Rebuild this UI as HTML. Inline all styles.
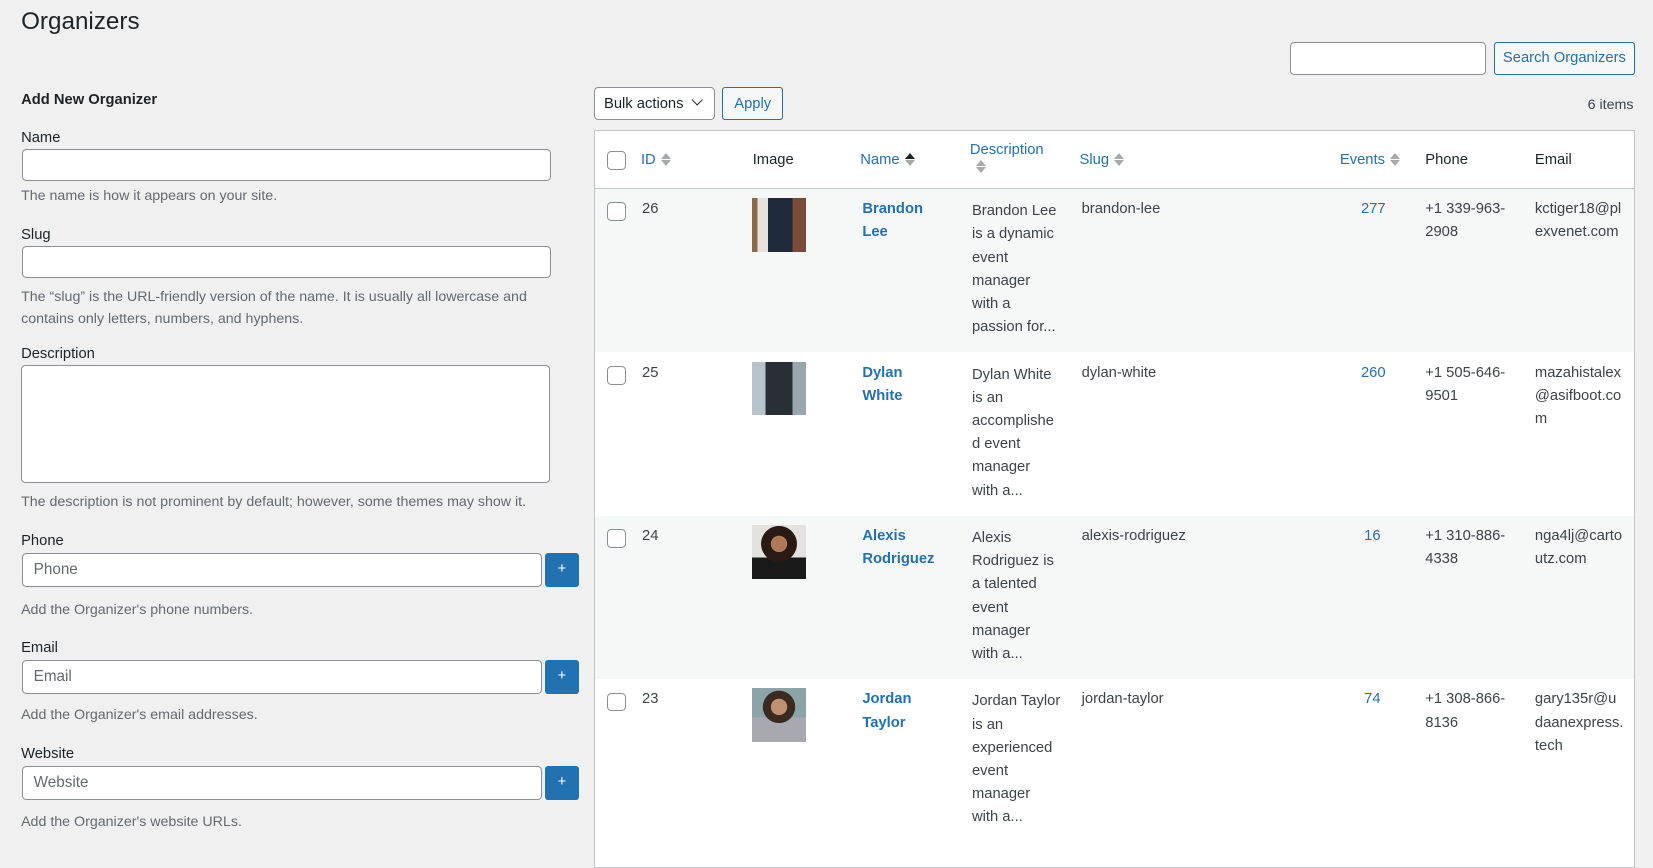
<!DOCTYPE html>
<html><head><meta charset="utf-8"><style>
html{zoom:1.0542}
body{margin:0;width:1568px;height:797px;overflow:hidden;background:#f0f0f1;font-family:"Liberation Sans",sans-serif;color:#3c434a;font-size:13.5px;position:relative}
.a{position:absolute;white-space:nowrap}
.lbl{color:#1d2327;font-size:14px}
.help{color:#646970;font-size:13.5px}
.inp{position:absolute;background:#fff;border:1px solid #8c8f94;border-radius:4px;box-sizing:border-box}
.ph{color:#646970;font-size:14.5px;padding:0 10px;line-height:30px}
.plus{position:absolute;background:#2271b1;color:#fff;border-radius:3px;width:32px;height:32px;text-align:center;line-height:32px;font-size:14px}
.btn{position:absolute;border:1px solid #2271b1;color:#2271b1;background:#f6f7f7;border-radius:3px;box-sizing:border-box;text-align:center;font-size:14px}
.blue{color:#2271b1}
.cb{position:absolute;width:16px;height:16px;border:1px solid #8c8f94;border-radius:4px;background:#fff}
.arr{display:inline-block;vertical-align:middle;margin-left:5px;width:9px}
.arr i{display:block;width:0;height:0;border-left:5px solid transparent;border-right:5px solid transparent}
.up{border-bottom:6px solid #a7aaad;margin-bottom:1px}
.dn{border-top:6px solid #a7aaad}
.row{position:absolute;left:564px;width:986px;height:155px}
.cell{position:absolute;line-height:22px;font-size:14px;white-space:nowrap}
.img{position:absolute;left:149px;top:9px;width:52px;height:51px}
</style></head><body>
<div class="a" style="left:20px;top:8px;font-size:23px;color:#1d2327">Organizers</div>
<div class="inp" style="left:1224px;top:40px;width:186px;height:31px"></div>
<div class="btn" style="left:1417px;top:40px;width:134px;height:31px;line-height:30px">Search Organizers</div>

<div class="a" style="left:20px;top:87px;font-weight:bold;font-size:14px;color:#1d2327">Add New Organizer</div>
<div class="a lbl" style="left:20px;top:123px">Name</div>
<div class="inp" style="left:21px;top:141px;width:502px;height:31px"></div>
<div class="a help" style="left:20px;top:178px">The name is how it appears on your site.</div>
<div class="a lbl" style="left:20px;top:215px">Slug</div>
<div class="inp" style="left:21px;top:233px;width:502px;height:31px"></div>
<div class="a help" style="left:20px;top:271px;line-height:21px">The “slug” is the URL-friendly version of the name. It is usually all lowercase and<br>contains only letters, numbers, and hyphens.</div>
<div class="a lbl" style="left:20px;top:328px">Description</div>
<div class="inp" style="left:20px;top:346px;width:502px;height:112px"></div>
<div class="a help" style="left:20px;top:469px">The description is not prominent by default; however, some themes may show it.</div>
<div class="a lbl" style="left:20px;top:506px">Phone</div>
<div class="inp ph" style="left:21px;top:525px;width:493px;height:32px">Phone</div>
<div class="plus" style="left:517px;top:525px">+</div>
<div class="a help" style="left:20px;top:571px">Add the Organizer's phone numbers.</div>
<div class="a lbl" style="left:20px;top:607px">Email</div>
<div class="inp ph" style="left:21px;top:626px;width:493px;height:32px">Email</div>
<div class="plus" style="left:517px;top:626px">+</div>
<div class="a help" style="left:20px;top:671px">Add the Organizer's email addresses.</div>
<div class="a lbl" style="left:20px;top:708px">Website</div>
<div class="inp ph" style="left:21px;top:727px;width:493px;height:32px">Website</div>
<div class="plus" style="left:517px;top:727px">+</div>
<div class="a help" style="left:20px;top:772px">Add the Organizer's website URLs.</div>

<div class="inp" style="left:563px;top:83px;width:115px;height:31px;line-height:31px;padding-left:9px;color:#1d2327;font-size:14px">Bulk actions <span style="display:inline-block;width:7px;height:7px;border-right:1.5px solid #1d2327;border-bottom:1.5px solid #1d2327;transform:rotate(45deg);margin:0 0 4px 5px"></span></div>
<div class="btn" style="left:685px;top:83px;width:58px;height:31px;line-height:31px">Apply</div>
<div class="a" style="left:1506px;top:92px;font-size:13.5px">6 items</div>

<div style="position:absolute;left:563px;top:123px;width:988px;height:700px;background:#fff;border:1px solid #c3c4c7;box-sizing:border-box"></div>
<div style="position:absolute;left:564px;top:178px;width:986px;height:1px;background:#c3c4c7"></div>
<div class="cb" style="left:576px;top:143px"></div>
<div class="a blue" style="left:608px;top:144px;font-size:14px">ID<span class="arr"><i class="up"></i><i class="dn"></i></span></div>
<div class="a" style="left:714px;top:144px;font-size:14px;color:#1d2327">Image</div>
<div class="a blue" style="left:816px;top:144px;font-size:14px">Name<span class="arr"><i class="up" style="border-bottom-color:#1d2327"></i><i class="dn"></i></span></div>
<div class="a blue" style="left:920px;top:135px;font-size:14px">Description<br><span class="arr" style="margin-left:6px"><i class="up"></i><i class="dn"></i></span></div>
<div class="a blue" style="left:1024px;top:144px;font-size:14px">Slug<span class="arr"><i class="up"></i><i class="dn"></i></span></div>
<div class="a blue" style="left:1271px;top:144px;font-size:14px">Events<span class="arr"><i class="up"></i><i class="dn"></i></span></div>
<div class="a" style="left:1352px;top:144px;font-size:14px;color:#1d2327">Phone</div>
<div class="a" style="left:1456px;top:144px;font-size:14px;color:#1d2327">Email</div>

<div class="row" style="top:179px;background:#f6f7f7">
<div class="cb" style="left:12px;top:13px"></div>
<div class="cell" style="left:45px;top:9px">26</div>
<div class="img" style="background:linear-gradient(90deg,#8a6a4a 0 10%,#e8e2da 10% 30%,#1e2a3a 30% 75%,#7a4a3a 75%)"></div>
<div class="cell blue" style="left:254px;top:9px;font-weight:bold">Brandon<br>Lee</div>
<div class="cell" style="left:358px;top:11px">Brandon Lee<br>is a dynamic<br>event<br>manager<br>with a<br>passion for...</div>
<div class="cell" style="left:462px;top:9px">brandon-lee</div>
<div class="cell blue" style="left:727px;top:9px">277</div>
<div class="cell" style="left:788px;top:9px">+1 339-963-<br>2908</div>
<div class="cell" style="left:892px;top:9px">kctiger18@pl<br>exvenet.com</div>
</div>
<div class="row" style="top:334px;background:#fff">
<div class="cb" style="left:12px;top:13px"></div>
<div class="cell" style="left:45px;top:9px">25</div>
<div class="img" style="background:linear-gradient(90deg,#b8c4cc 0 25%,#2a2f36 25% 75%,#9aa6ae 75%)"></div>
<div class="cell blue" style="left:254px;top:9px;font-weight:bold">Dylan<br>White</div>
<div class="cell" style="left:358px;top:11px">Dylan White<br>is an<br>accomplishe<br>d event<br>manager<br>with a...</div>
<div class="cell" style="left:462px;top:9px">dylan-white</div>
<div class="cell blue" style="left:727px;top:9px">260</div>
<div class="cell" style="left:788px;top:9px">+1 505-646-<br>9501</div>
<div class="cell" style="left:892px;top:9px">mazahistalex<br>@asifboot.co<br>m</div>
</div>
<div class="row" style="top:489px;background:#f6f7f7">
<div class="cb" style="left:12px;top:13px"></div>
<div class="cell" style="left:45px;top:9px">24</div>
<div class="img" style="background:radial-gradient(circle at 50% 35%,#b07a5a 0 18%,#2a1a14 19% 40%,transparent 41%),linear-gradient(#e4e2de 0 60%,#1a1a1a 60%)"></div>
<div class="cell blue" style="left:254px;top:9px;font-weight:bold">Alexis<br>Rodriguez</div>
<div class="cell" style="left:358px;top:11px">Alexis<br>Rodriguez is<br>a talented<br>event<br>manager<br>with a...</div>
<div class="cell" style="left:462px;top:9px">alexis-rodriguez</div>
<div class="cell blue" style="left:730px;top:9px">16</div>
<div class="cell" style="left:788px;top:9px">+1 310-886-<br>4338</div>
<div class="cell" style="left:892px;top:9px">nga4lj@carto<br>utz.com</div>
</div>
<div class="row" style="top:644px;background:#fff">
<div class="cb" style="left:12px;top:13px"></div>
<div class="cell" style="left:45px;top:9px">23</div>
<div class="img" style="background:radial-gradient(circle at 50% 35%,#c09070 0 18%,#3a2a20 19% 36%,transparent 37%),linear-gradient(#8aa4a8 0 55%,#a8a8b0 55%)"></div>
<div class="cell blue" style="left:254px;top:9px;font-weight:bold">Jordan<br>Taylor</div>
<div class="cell" style="left:358px;top:11px">Jordan Taylor<br>is an<br>experienced<br>event<br>manager<br>with a...</div>
<div class="cell" style="left:462px;top:9px">jordan-taylor</div>
<div class="cell blue" style="left:730px;top:9px">74</div>
<div class="cell" style="left:788px;top:9px">+1 308-866-<br>8136</div>
<div class="cell" style="left:892px;top:9px">gary135r@u<br>daanexpress.<br>tech</div>
</div>
</body></html>
